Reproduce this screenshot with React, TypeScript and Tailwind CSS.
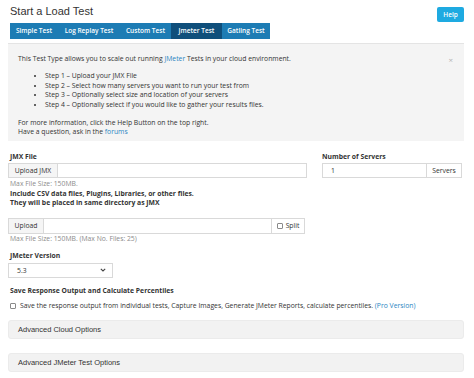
import React from "react";

const tabs = [
  { label: "Simple Test", w: "w-[48px]" },
  { label: "Log Replay Test", w: "w-[62px]" },
  { label: "Custom Test", w: "w-[51px]" },
  { label: "Jmeter Test", w: "w-[51px]", active: true },
  { label: "Gatling Test", w: "w-[48px]" },
];

const steps = [
  "Step 1 – Upload your JMX File",
  "Step 2 – Select how many servers you want to run your test from",
  "Step 3 – Optionally select size and location of your servers",
  "Step 4 – Optionally select if you would like to gather your results files.",
];

function CheckBox() {
  return (
    <span className="inline-block w-[6px] h-[6px] border border-[#8a8a8a] rounded-[1px] bg-white shrink-0" />
  );
}

export default function App() {
  return (
    <div
      className="w-[474px] h-[378px] bg-white text-[#333] overflow-hidden"
      style={{ fontFamily: '"Open Sans", "Liberation Sans", sans-serif' }}
    >
      {/* Header */}
      <div className="flex justify-between pl-[10px] pr-[10px]">
        <div className="flex flex-col">
          <h1
            className="pt-[4px] text-[11px] leading-[14px] text-[#333]"
            style={{ fontFamily: '"Liberation Sans", Arial, sans-serif' }}
          >
            Start a Load Test
          </h1>
          <div className="flex mt-[5px] h-[16px]">
            {tabs.map((t) => (
              <div
                key={t.label}
                className={`${t.w} flex items-center justify-center text-[6.5px] font-semibold text-white ${
                  t.active ? "bg-[#0f4f7b]" : "bg-[#1d7cb4]"
                }`}
              >
                {t.label}
              </div>
            ))}
          </div>
        </div>
        <div className="pt-[7px]">
          <div className="w-[27px] h-[15px] rounded-[2px] bg-[#1eaae1] text-white text-[6.5px] font-semibold flex items-center justify-center">
            Help
          </div>
        </div>
      </div>

      {/* Info box */}
      <div className="relative ml-[8px] mr-[10px] mt-[4px] bg-[#f4f4f4] border-t border-[#e4e4e4] pl-[10px] pt-[10px] pb-[4px] text-[6.8px] leading-[9.5px]">
        <span className="absolute right-[11px] top-[12px] text-[#b5b5b5] text-[8px] leading-[8px]">×</span>
        <p>
          This Test Type allows you to scale out running{" "}
          <span className="text-[#2a86c2]">JMeter</span> Tests in your cloud environment.
        </p>
        <ul className="mt-[7.5px] pl-[27px] list-disc leading-[9.6px]">
          {steps.map((s) => (
            <li key={s}>{s}</li>
          ))}
        </ul>
        <p className="mt-[8.5px]">For more information, click the Help Button on the top right.</p>
        <p>
          Have a question, ask in the <span className="text-[#2a86c2]">forums</span>
        </p>
      </div>

      {/* Form */}
      <div className="flex ml-[8px] text-[6.8px] leading-[9.5px]">
        <div className="w-[299px] flex flex-col">
          <div className="mt-[11px] pl-[2px] font-bold">JMX File</div>
          <div className="mt-[2px] flex h-[15px]">
            <div className="w-[50px] border border-[#d9d9d9] bg-[#f5f5f5] flex items-center justify-center">
              Upload JMX
            </div>
            <div className="flex-1 border border-l-0 border-[#d9d9d9] bg-white" />
          </div>
          <div className="mt-[1px] pl-[2px] text-[#8c8c8c]">Max File Size: 150MB.</div>
          <div className="pl-[2px] font-bold">
            Include CSV data files, Plugins, Libraries, or other files.
            <br />
            They will be placed in same directory as JMX
          </div>
          <div className="mt-[10px] flex h-[16px] w-[297px]">
            <div className="w-[36px] border border-[#d9d9d9] bg-[#f5f5f5] flex items-center justify-center">
              Upload
            </div>
            <div className="flex-1 border border-l-0 border-[#d9d9d9] bg-white" />
            <div className="w-[33px] border border-l-0 border-[#d9d9d9] bg-white flex items-center justify-center gap-[3px]">
              <CheckBox />
              <span>Split</span>
            </div>
          </div>
          <div className="pl-[2px] text-[#8c8c8c]">Max File Size: 150MB. (Max No. Files: 25)</div>
          <div className="mt-[8px] pl-[2px] font-bold">JMeter Version</div>
          <div className="mt-[2px] w-[105px] h-[15px] border border-[#d9d9d9] bg-white flex items-center justify-between pl-[8px] pr-[6px]">
            <span>5.3</span>
            <svg width="6" height="4" viewBox="0 0 6 4">
              <path d="M0.8 0.8 L3 3 L5.2 0.8" fill="none" stroke="#444" strokeWidth="1.1" />
            </svg>
          </div>
          <div className="mt-[8px] pl-[2px] font-bold whitespace-nowrap">
            Save Response Output and Calculate Percentiles
          </div>
        </div>
        <div className="ml-[15px] w-[140px] flex flex-col">
          <div className="mt-[11px] font-bold">Number of Servers</div>
          <div className="mt-[2px] flex h-[15px]">
            <div className="flex-1 border border-[#d9d9d9] bg-white flex items-center pl-[8px]">1</div>
            <div className="w-[35px] border border-l-0 border-[#d9d9d9] bg-white flex items-center justify-center">
              Servers
            </div>
          </div>
        </div>
      </div>

      <div className="ml-[10px] mt-[5.5px] flex items-center gap-[4px] text-[6.8px] leading-[9.5px] whitespace-nowrap">
        <CheckBox />
        <span>
          Save the response output from individual tests, Capture Images, Generate JMeter Reports, calculate
          percentiles. <span className="text-[#2a86c2]">(Pro Version)</span>
        </span>
      </div>

      <div
        className="ml-[8px] mr-[10px] flex flex-col text-[7.5px] text-[#333]"
        style={{ fontFamily: '"Liberation Sans", Arial, sans-serif' }}
      >
        <div className="mt-[10px] h-[19px] rounded-[3px] bg-[#f2f2f2] border border-[#ebebeb] flex items-center pl-[9px]">
          Advanced Cloud Options
        </div>
        <div className="mt-[14px] h-[19px] rounded-[3px] bg-[#f2f2f2] border border-[#ebebeb] flex items-center pl-[9px]">
          Advanced JMeter Test Options
        </div>
      </div>
    </div>
  );
}
